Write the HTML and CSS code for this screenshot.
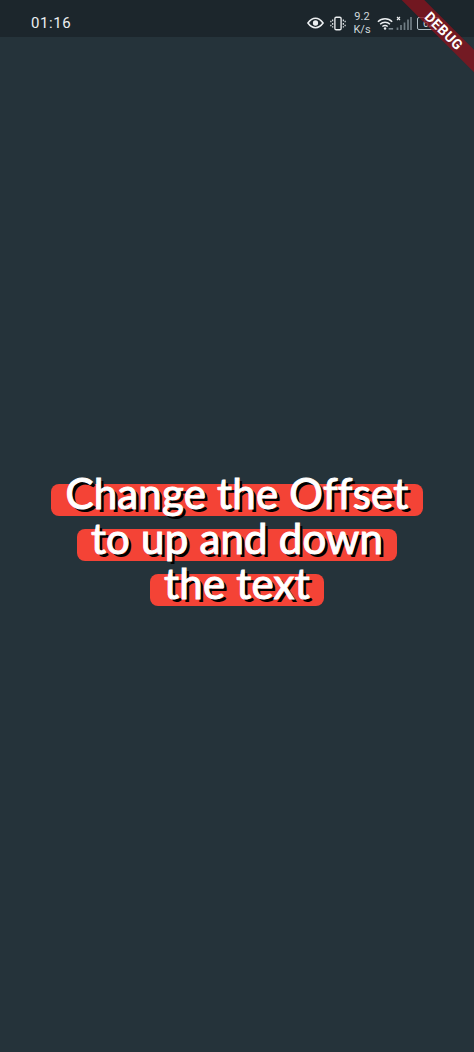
FILE: index.html
```html
<!DOCTYPE html>
<html>
<head>
    <link rel="stylesheet" href="styles.css">
</head>
<body>
    <div class="screen">
        <!-- Status bar -->
        <div class="status-bar">
            <span class="clock">01:16</span>
            <div class="status-icons">
                <svg class="icon-eye" viewBox="0 0 18 12" width="17" height="12">
                    <path d="M1 6C3.500 2.600 6 1 9 1s5.500 1.600 8 5c-2.500 3.400-5 5-8 5S3.500 9.400 1 6z" fill="none" stroke="#eceff1" stroke-width="1.700"/>
                    <circle cx="9" cy="6" r="2.800" fill="#eceff1"/>
                </svg>
                <svg class="icon-vibrate" viewBox="0 0 18 16" width="16" height="15">
                    <rect x="5.500" y="1" width="7" height="14" rx="1.500" fill="none" stroke="#eceff1" stroke-width="1.500"/>
                    <path d="M3 3.500v2M1 5v1.500M3 7.500v2M1 9.500V11M3 11v1.500M15 3.500v2M17 5v1.500M15 7.500v2M17 9.500V11M15 11v1.500" stroke="#eceff1" stroke-width="1.300"/>
                </svg>
                <div class="net-speed">
                    <span>9.2</span>
                    <span>K/s</span>
                </div>
                <svg class="icon-wifi" viewBox="0 0 19 14" width="17" height="13">
                    <path d="M1 5c4.500-4.400 11.500-4.400 16 0M3.500 7.800c3-2.800 8-2.800 11 0M6 10.400c1.600-1.300 4.400-1.300 6 0" fill="none" stroke="#eceff1" stroke-width="1.600"/>
                    <circle cx="9" cy="12.500" r="1.400" fill="#eceff1"/>
                    <path d="M13 13h5" stroke="#b0bec5" stroke-width="1.200"/>
                </svg>
                <svg class="icon-signal" viewBox="0 0 16 14" width="16" height="14">
                    <path d="M1 1l3 3M4 1L1 4" stroke="#eceff1" stroke-width="1.100"/>
                    <path d="M1.500 14v-2.500M5 14V9M8.500 14V6.500M12 14V3.500M15 14V1" stroke="#6f7c83" stroke-width="1.700"/>
                </svg>
                <div class="battery">
                    <span>62</span>
                </div>
            </div>
        </div>

        <!-- Highlighted text -->
        <div class="content">
            <div class="headline">
                <div class="line"><span class="pill"><span class="pill-text">Change the Offset</span></span></div>
                <div class="line"><span class="pill"><span class="pill-text">to up and down</span></span></div>
                <div class="line"><span class="pill"><span class="pill-text">the text</span></span></div>
            </div>
        </div>

        <!-- Debug ribbon -->
        <div class="debug-banner"><span>DEBUG</span></div>
    </div>
</body>
</html>
```

FILE: styles.css
```css
* {
    box-sizing: border-box;
}

html, body {
    margin: 0;
    padding: 0;
}

body {
    font-family: Lato, "Noto Sans", sans-serif;
    background: #25333a;
}

.screen {
    position: relative;
    width: 474px;
    height: 1052px;
    overflow: hidden;
    display: flex;
    flex-direction: column;
    background: #25333a;
}

.status-bar {
    height: 37px;
    flex-shrink: 0;
    display: flex;
    align-items: center;
    justify-content: space-between;
    padding: 9px 34px 0 31px;
    background: #1c262c;
    color: #eceff1;
}

.clock {
    font-family: Roboto, sans-serif;
    font-size: 15px;
    letter-spacing: 0.600px;
}

.status-icons {
    display: flex;
    align-items: center;
}

.icon-vibrate {
    margin-left: 6px;
}

.net-speed {
    display: flex;
    flex-direction: column;
    align-items: center;
    width: 18px;
    margin: 0 6px 0 7px;
    font-family: Roboto, sans-serif;
    font-size: 11px;
    line-height: 13px;
    color: #cfd8dc;
}

.icon-signal {
    margin-left: 2px;
}

.battery {
    width: 23px;
    height: 13px;
    margin-left: 5px;
    border: 1px solid #b0bec5;
    border-radius: 2px;
    font-family: Roboto, sans-serif;
    font-size: 10px;
    line-height: 11px;
    padding-left: 5px;
    color: #cfd8dc;
}

.content {
    flex: 1;
    padding-top: 447px;
}

.headline {
    display: flex;
    flex-direction: column;
    align-items: center;
    gap: 13px;
}

.line {
    display: flex;
    justify-content: center;
}

.pill {
    display: block;
    height: 32px;
    padding: 0 14px;
    border-radius: 8px;
    background: #f44336;
}

.pill-text {
    display: block;
    transform: translateY(-12px);
    font-size: 42px;
    font-weight: 400;
    line-height: 42px;
    letter-spacing: 0.200px;
    color: #fff;
    white-space: nowrap;
    -webkit-text-stroke: 1px #fff;
    text-shadow: 3px 3px 0 #000;
}

.debug-banner {
    position: absolute;
    top: 23px;
    right: -35px;
    width: 130px;
    height: 16px;
    display: flex;
    align-items: center;
    justify-content: center;
    transform: rotate(45deg);
    background: rgba(135, 20, 30, 0.8);
}

.debug-banner span {
    font-family: Roboto, sans-serif;
    font-size: 14px;
    font-weight: 700;
    letter-spacing: 0.500px;
    color: #fff;
}
```
